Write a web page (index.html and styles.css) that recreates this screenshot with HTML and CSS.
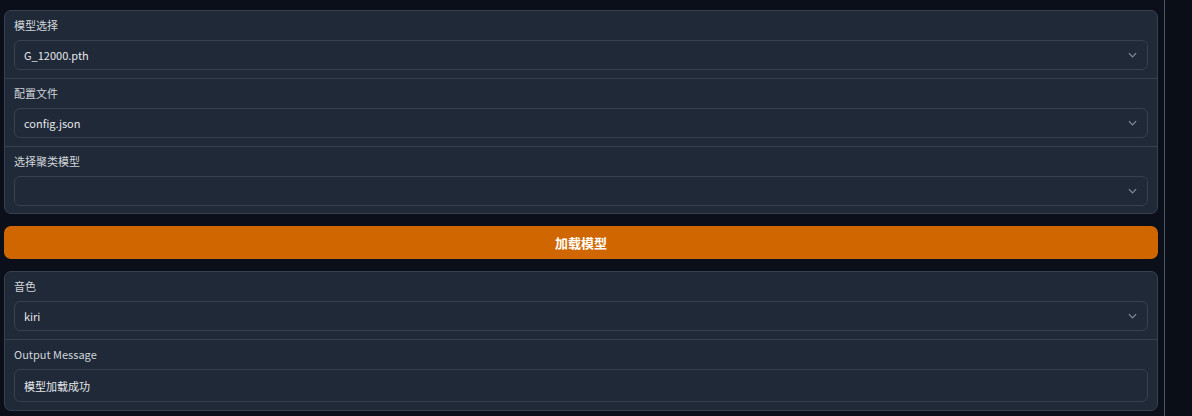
FILE: index.html
```html
<!DOCTYPE html>
<html lang="zh">
<head>
<meta charset="utf-8">
<link rel="stylesheet" href="styles.css">
</head>
<body>
<div class="app">
  <main class="main">
    <section class="panel">
      <div class="field">
        <div class="label">模型选择</div>
        <div class="input select"><span>G_12000.pth</span><svg class="chev" viewBox="0 0 10 6" width="10" height="6"><path d="M1 1l4 4 4-4" fill="none" stroke="currentColor" stroke-width="1.3"/></svg></div>
      </div>
      <div class="field">
        <div class="label">配置文件</div>
        <div class="input select"><span>config.json</span><svg class="chev" viewBox="0 0 10 6" width="10" height="6"><path d="M1 1l4 4 4-4" fill="none" stroke="currentColor" stroke-width="1.3"/></svg></div>
      </div>
      <div class="field">
        <div class="label">选择聚类模型</div>
        <div class="input select"><span></span><svg class="chev" viewBox="0 0 10 6" width="10" height="6"><path d="M1 1l4 4 4-4" fill="none" stroke="currentColor" stroke-width="1.3"/></svg></div>
      </div>
    </section>
    <button class="primary">加载模型</button>
    <section class="panel">
      <div class="field">
        <div class="label">音色</div>
        <div class="input select"><span>kiri</span><svg class="chev" viewBox="0 0 10 6" width="10" height="6"><path d="M1 1l4 4 4-4" fill="none" stroke="currentColor" stroke-width="1.3"/></svg></div>
      </div>
      <div class="field field-output">
        <div class="label">Output Message</div>
        <div class="input textarea"><span>模型加载成功</span></div>
      </div>
    </section>
  </main>
  <aside class="side"></aside>
</div>
</body>
</html>
```

FILE: styles.css
```css
html, body {
  margin: 0;
  padding: 0;
  background: #0b0f19;
  height: 100%;
  overflow: hidden;
}
body {
  font-family: "Noto Sans CJK SC", "Noto Sans", sans-serif;
  color: #e5e7eb;
}
.app {
  display: flex;
  height: 416px;
}
.main {
  width: 1165px;
  box-sizing: border-box;
  padding: 10px 6px 0 4px;
  border-right: 1px solid #4b5563;
  display: flex;
  flex-direction: column;
  gap: 12px;
}
.side {
  flex: 1;
  background: #0a0e17;
}
.panel {
  background: #1f2937;
  border: 1px solid #374151;
  border-radius: 7px;
  overflow: hidden;
}
.field {
  padding: 6px 9px 8px;
  border-top: 1px solid #374151;
}
.field:first-child {
  border-top: none;
}
.field:last-child {
  padding-bottom: 7px;
}
.field.field-output {
  padding-bottom: 8px;
}
.label {
  font-size: 11px;
  line-height: 16px;
  height: 16px;
  color: #d1d5db;
  margin-bottom: 7px;
}
.input {
  box-sizing: border-box;
  height: 30px;
  border: 1px solid #374151;
  border-radius: 6px;
  background: #1f2937;
  display: flex;
  align-items: center;
  padding: 0 10px 0 9px;
  font-size: 11px;
  color: #e5e7eb;
}
.input span {
  flex: 1;
}
.textarea {
  height: 33px;
}
.chev {
  color: #858d9b;
  width: 9px;
  height: 6px;
}
.primary {
  height: 33px;
  border: none;
  border-radius: 7px;
  background: #cf6600;
  color: #ffffff;
  font-family: "Noto Sans CJK SC", "Noto Sans", sans-serif;
  font-size: 13px;
  font-weight: 700;
  padding: 0;
}
```
